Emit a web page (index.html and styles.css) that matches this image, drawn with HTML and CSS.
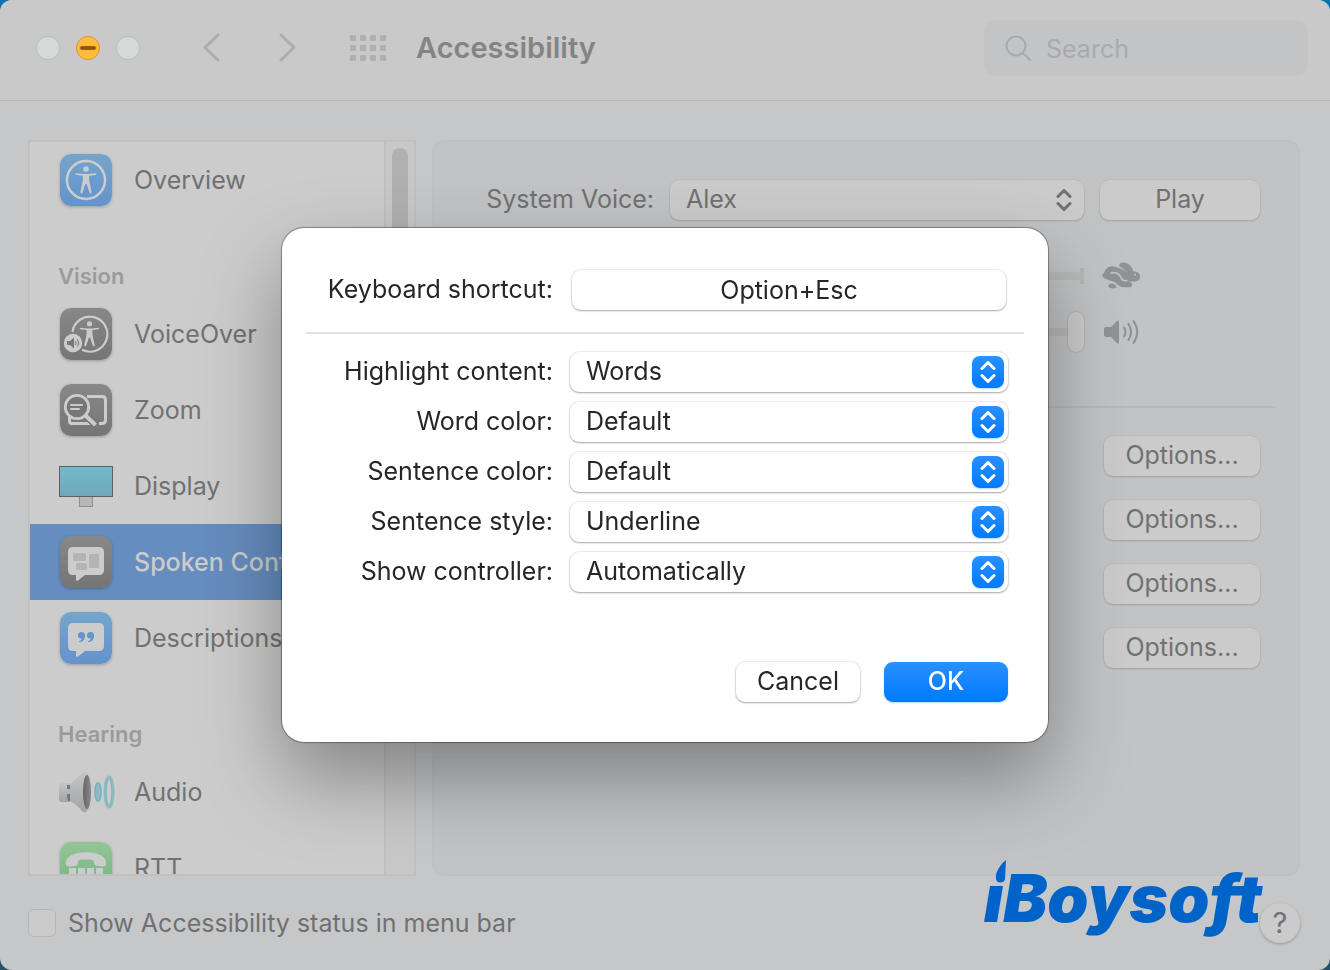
FILE: index.html
```html
<!DOCTYPE html>
<html lang="en">
<head>
    <meta charset="UTF-8">
    <meta name="viewport" content="width=device-width, initial-scale=1.0">
    <title>Accessibility</title>
    <link rel="stylesheet" href="styles.css">
</head>
<body>
    <!-- shared icons -->
    <svg class="sprite" aria-hidden="true">
        <defs>
            <linearGradient id="blue" x1="0" y1="0" x2="0" y2="1">
                <stop offset="0" stop-color="#74a5cc"/><stop offset="1" stop-color="#6493cb"/>
            </linearGradient>
            <linearGradient id="gray" x1="0" y1="0" x2="0" y2="1">
                <stop offset="0" stop-color="#878888"/><stop offset="1" stop-color="#757575"/>
            </linearGradient>
            <linearGradient id="green" x1="0" y1="0" x2="0" y2="1">
                <stop offset="0" stop-color="#94c596"/><stop offset="1" stop-color="#6fb382"/>
            </linearGradient>
            <linearGradient id="screen" x1="0" y1="0" x2="0" y2="1">
                <stop offset="0" stop-color="#73b9cc"/><stop offset="1" stop-color="#6fa8b8"/>
            </linearGradient>
            <linearGradient id="metal" x1="0" y1="0" x2="0" y2="1">
                <stop offset="0" stop-color="#c4c5c6"/><stop offset="1" stop-color="#a2a3a5"/>
            </linearGradient>
            <linearGradient id="cone" x1="0" y1="0" x2="1" y2="0">
                <stop offset="0" stop-color="#646464"/><stop offset="1" stop-color="#8b8b8b"/>
            </linearGradient>
        </defs>
        <symbol id="updown" viewBox="0 0 16 24">
            <path d="M2 8.500 8 2.500l6 6M2 15.500l6 6 6-6" fill="none" stroke="currentColor" stroke-width="3" stroke-linecap="round" stroke-linejoin="round"/>
        </symbol>
        <symbol id="person" viewBox="0 0 22 28">
            <circle cx="11" cy="3" r="2.800"/>
            <path d="M1 7.200Q.4 7 .6 8.100q.1.700 1 .8l6.200.9q.3 3-.2 6l-2.200 10q-.2 1.300.7 1.600 1 .2 1.400-1L10.300 18h1.400l2.800 8.400q.5 1.200 1.400 1 1-.3.700-1.600l-2.200-10q-.5-3-.2-6l6.200-.9q.9-.1 1-.8.100-1.100-.9-.9l-7 .8h-5z"/>
        </symbol>
    </svg>

    <div class="window">
        <header class="toolbar">
            <div class="lights">
                <button class="light" aria-label="Close"></button>
                <button class="light minimize" aria-label="Minimize"></button>
                <button class="light" aria-label="Full screen"></button>
            </div>
            <button class="nav-btn" aria-label="Back">
                <svg width="24" height="32" viewBox="0 0 24 32"><path d="M18 3 5 15.500 18 28"/></svg>
            </button>
            <button class="nav-btn forward" aria-label="Forward">
                <svg width="24" height="32" viewBox="0 0 24 32"><path d="m6 3 13 12.500L6 28"/></svg>
            </button>
            <button class="nav-btn show-all" aria-label="Show all">
                <svg width="36" height="26" viewBox="0 0 36 26">
                    <g class="dots">
                        <rect x="0" y="0" width="6" height="6" rx="1"/><rect x="10" y="0" width="6" height="6" rx="1"/><rect x="20" y="0" width="6" height="6" rx="1"/><rect x="30" y="0" width="6" height="6" rx="1"/>
                        <rect x="0" y="10" width="6" height="6" rx="1"/><rect x="10" y="10" width="6" height="6" rx="1"/><rect x="20" y="10" width="6" height="6" rx="1"/><rect x="30" y="10" width="6" height="6" rx="1"/>
                        <rect x="0" y="20" width="6" height="6" rx="1"/><rect x="10" y="20" width="6" height="6" rx="1"/><rect x="20" y="20" width="6" height="6" rx="1"/><rect x="30" y="20" width="6" height="6" rx="1"/>
                    </g>
                </svg>
            </button>
            <h1>Accessibility</h1>
            <label class="search">
                <svg width="28" height="28" viewBox="0 0 28 28"><circle cx="12" cy="12" r="9.500"/><path d="m19 19 7 7"/></svg>
                <input type="search" placeholder="Search" aria-label="Search">
            </label>
        </header>

        <main class="content">
            <nav class="sidebar">
                <div class="list">
                    <a class="item" href="#overview">
                        <svg class="icon" viewBox="0 0 52 52">
                            <rect width="52" height="52" rx="11" fill="url(#blue)"/>
                            <circle cx="26" cy="26" r="19" fill="none" stroke="#ccc" stroke-width="2.500"/>
                            <use href="#person" x="15" y="12" width="22" height="28" fill="#ccc"/>
                        </svg>
                        <span>Overview</span>
                    </a>
                    <h2>Vision</h2>
                    <a class="item" href="#voiceover">
                        <svg class="icon" viewBox="0 0 52 52">
                            <rect width="52" height="52" rx="11" fill="url(#gray)"/>
                            <path d="M12.500 24A17.500 17.500 0 1 1 22 41.800" fill="none" stroke="#ccc" stroke-width="2.200"/>
                            <use href="#person" x="19" y="13" width="21" height="26" fill="#ccc"/>
                            <circle cx="13" cy="35" r="9.200" fill="#ccc"/>
                            <path d="M7 33h3l4-3.500v11L10 37H7z" fill="#777"/>
                            <path d="M15.500 33q1.200 2 0 4M17.500 31.500q2.500 3.500 0 7" fill="none" stroke="#777" stroke-width="1"/>
                        </svg>
                        <span>VoiceOver</span>
                    </a>
                    <a class="item" href="#zoom">
                        <svg class="icon" viewBox="0 0 52 52">
                            <rect width="52" height="52" rx="11" fill="url(#gray)"/>
                            <path d="M27 12.500h15q3.500 0 3.500 3.500v20q0 3.500-3.500 3.500h-3M9.500 33v4q0 2.500 2.500 2.500h18" fill="none" stroke="#ccc" stroke-width="3"/>
                            <path d="m25 31 11 10.500" stroke="#777" stroke-width="7"/>
                            <path d="m25.500 31.500 10 9.500" stroke="#ccc" stroke-width="4"/>
                            <circle cx="17" cy="23" r="11.700" fill="#777" stroke="#ccc" stroke-width="2.800"/>
                            <path d="M11 21h11M11 25h8" stroke="#ccc" stroke-width="2" stroke-linecap="round"/>
                        </svg>
                        <span>Zoom</span>
                    </a>
                    <a class="item" href="#display">
                        <svg class="icon plain" viewBox="0 0 52 52">
                            <rect x="19.500" y="36" width="13" height="10.500" fill="#b7b7b7" stroke="#8e8e8e"/>
                            <rect x="-.5" y="6.500" width="53" height="30" fill="url(#screen)" stroke="#5c6264"/>
                        </svg>
                        <span>Display</span>
                    </a>
                    <a class="item selected" href="#spoken-content" aria-current="page">
                        <svg class="icon" viewBox="0 0 52 52">
                            <rect width="52" height="52" rx="11" fill="url(#gray)"/>
                            <path d="M13 11h26q5 0 5 5v18q0 5-5 5H25l-7 5.500q-2 1-2-1V39h-3q-5 0-5-5V16q0-5 5-5z" fill="#ccc"/>
                            <rect x="13" y="17" width="13" height="8" rx="1.500" fill="#b4b4b4"/>
                            <rect x="29" y="18" width="10" height="14" rx="1.500" fill="#b4b4b4"/>
                            <rect x="16" y="27" width="11" height="7" rx="1.500" fill="#b4b4b4"/>
                        </svg>
                        <span>Spoken Content</span>
                    </a>
                    <a class="item" href="#descriptions">
                        <svg class="icon" viewBox="0 0 52 52">
                            <rect width="52" height="52" rx="11" fill="url(#blue)"/>
                            <path d="M13 11h26q5 0 5 5v18q0 5-5 5H25l-7 5.500q-2 1-2-1V39h-3q-5 0-5-5V16q0-5 5-5z" fill="#ccc"/>
                            <path d="M21.500 20c-4.700 0-4.700 6.500-.5 6.500h1q-.8 2-2.800 2.700-.5.500.2 1 5.600-1 5.600-6.500 0-3.700-3.500-3.700zM30.500 20c-4.700 0-4.700 6.500-.5 6.500h1q-.8 2-2.800 2.700-.5.500.2 1 5.600-1 5.600-6.500 0-3.700-3.500-3.700z" fill="#6594c8"/>
                        </svg>
                        <span>Descriptions</span>
                    </a>
                    <h2>Hearing</h2>
                    <a class="item" href="#audio">
                        <svg class="icon plain" viewBox="0 0 52 52">
                            <path d="M2 17h8v19H2q-3 0-3-3V20q0-3 3-3z" fill="url(#metal)"/>
                            <path d="M7 19h4v4H7zM7 28h4v7H8q-1-3-1-7z" fill="#777"/>
                            <path d="M10 18Q16 14 22 7q2-2 4-1 5 4 5 20t-5 20q-2 1-4-1Q16 38 10 35z" fill="url(#metal)"/>
                            <ellipse cx="27" cy="26" rx="4" ry="17" fill="url(#cone)"/>
                            <ellipse cx="38" cy="26" rx="3" ry="9" fill="#94b8c1" stroke="#75b5c2" stroke-width="1.500"/>
                            <ellipse cx="49" cy="26" rx="4" ry="15" fill="none" stroke="#8fb8c1" stroke-width="3"/>
                            <ellipse cx="49" cy="26" rx="2.700" ry="13" fill="none" stroke="#71b5c4" stroke-width=".7"/>
                        </svg>
                        <span>Audio</span>
                    </a>
                    <a class="item" href="#rtt">
                        <svg class="icon" viewBox="0 0 52 52">
                            <rect width="52" height="52" rx="11" fill="url(#green)"/>
                            <path d="M6 20C7 7 45 7 46 20q1 5-4 4.500l-5-.5q-3-.5-3-3.500-.2-3-4-3h-8q-4 0-4 3 0 3-3 3.500l-5 .5q-5 .5-4-4.500z" fill="#ccc"/>
                            <path d="M9 26h7v9H9zM18 26h7v9h-7zM27 26h7v9h-7zM36 26h7v9h-7z" fill="#ccc"/>
                        </svg>
                        <span>RTT</span>
                    </a>
                </div>
                <div class="scrollbar"><div class="thumb"></div></div>
            </nav>

            <section class="panel">
                <div class="voice">
                    <label for="voice">System Voice:</label>
                    <div class="select">
                        <select id="voice"><option>Alex</option></select>
                        <svg class="arrows" width="16" height="24"><use href="#updown"/></svg>
                    </div>
                    <button class="btn dim">Play</button>

                    <div class="slider rate">
                        <input type="range" min="0" max="10" value="5" aria-label="Speaking rate">
                    </div>
                    <svg class="level" width="40" height="30" viewBox="0 0 120 90">
                        <path d="M52 11C58-2 88 4 94 31c16 1 22 10 20 20-1 9-13 11-20 11l-16-1 8 3c7 3 6 15-4 15H64c-10 0-18-9-26-15-8-4-18-6-23-9C10 53 4 52 1 46c0-6 4-8 6-12C11 20 24 13 39 17c14 2 26 11 40 18L59 21c-5-3-9-6-7-10zM22 70c10-6 18 0 22 9-6 6-25 4-26-4z"/>
                        <path class="cut" d="M27 36c17-5 28 5 31 16 2 7 8 8 16 7"/>
                        <circle class="eye" cx="99" cy="41" r="3"/>
                    </svg>

                    <div class="slider volume">
                        <input type="range" min="0" max="10" value="10" aria-label="Speaking volume">
                    </div>
                    <svg class="level" width="40" height="30" viewBox="0 0 40 30">
                        <path d="M4 10h5l6-6q2-1.500 2 1v20q0 2.500-2 1l-6-6H4q-2 0-2-2v-6q0-2 2-2z"/>
                        <path class="waves" d="M22 10.500q3 4.500 0 9M26.500 7q5 8 0 16M31.500 4q7.500 11 0 22"/>
                    </svg>
                </div>
                <hr>
                <div class="options">
                    <button class="btn dim">Options...</button>
                    <button class="btn dim">Options...</button>
                    <button class="btn dim">Options...</button>
                    <button class="btn dim">Options...</button>
                </div>
            </section>
        </main>

        <footer class="footer">
            <input type="checkbox" id="status">
            <label for="status">Show Accessibility status in menu bar</label>
            <button class="help">?</button>
        </footer>

        <div class="logo" aria-label="iBoysoft">
            <svg width="12" height="24" viewBox="0 0 12 24"><path d="M11 0C3 7 0 14 1 19q1 4 5 3.500 4-.5 4-4z"/></svg>
            <span>ıBoysoft</span>
        </div>
    </div>

    <div class="overlay">
        <dialog class="sheet" open>
            <form method="dialog">
                <div class="row">
                    <label for="shortcut">Keyboard shortcut:</label>
                    <button type="button" class="btn" id="shortcut">Option+Esc</button>
                </div>
                <hr>
                <div class="row">
                    <label for="highlight">Highlight content:</label>
                    <div class="select">
                        <select id="highlight"><option>Words</option></select>
                        <span class="stepper"><svg width="16" height="24"><use href="#updown"/></svg></span>
                    </div>
                </div>
                <div class="row">
                    <label for="word-color">Word color:</label>
                    <div class="select">
                        <select id="word-color"><option>Default</option></select>
                        <span class="stepper"><svg width="16" height="24"><use href="#updown"/></svg></span>
                    </div>
                </div>
                <div class="row">
                    <label for="sentence-color">Sentence color:</label>
                    <div class="select">
                        <select id="sentence-color"><option>Default</option></select>
                        <span class="stepper"><svg width="16" height="24"><use href="#updown"/></svg></span>
                    </div>
                </div>
                <div class="row">
                    <label for="sentence-style">Sentence style:</label>
                    <div class="select">
                        <select id="sentence-style"><option>Underline</option></select>
                        <span class="stepper"><svg width="16" height="24"><use href="#updown"/></svg></span>
                    </div>
                </div>
                <div class="row">
                    <label for="controller">Show controller:</label>
                    <div class="select">
                        <select id="controller"><option>Automatically</option></select>
                        <span class="stepper"><svg width="16" height="24"><use href="#updown"/></svg></span>
                    </div>
                </div>
                <div class="actions">
                    <button class="btn">Cancel</button>
                    <button class="btn primary">OK</button>
                </div>
            </form>
        </dialog>
    </div>
</body>
</html>
```

FILE: styles.css
```css
* {
    box-sizing: border-box;
}
body {
    margin: 0;
    background: linear-gradient(#0a74b0, #25506b);
    font-family: Inter, "Liberation Sans", sans-serif;
    font-size: 25px;
    line-height: 32px;
    color: #717171;
}
button, input, select {
    font: inherit;
    color: inherit;
    margin: 0;
}
button {
    padding: 0;
    border: none;
    background: none;
}
hr {
    height: 2px;
    margin: 0;
    border: none;
    background: #b7b8b9;
}
.sprite {
    position: absolute;
    width: 0;
    height: 0;
}
.window {
    display: flex;
    flex-direction: column;
    height: 100vh;
    background: #c6c7c9;
    border-radius: 12px;
    overflow: hidden;
}

/* toolbar */
.toolbar {
    display: flex;
    align-items: center;
    padding: 20px 22px 24px 36px;
    background: #c8c9c8;
    border-bottom: 1px solid #b5b6b5;
}
.lights {
    display: flex;
    gap: 16px;
    margin-right: 60px;
}
.light {
    width: 24px;
    height: 24px;
    border-radius: 50%;
    background: #d6dada;
    border: 1px solid #b9bbbb;
}
.minimize {
    display: flex;
    align-items: center;
    justify-content: center;
    background: #ffbd3e;
    border-color: #d9982c;
}
.minimize::before {
    content: "";
    width: 16px;
    height: 4px;
    border-radius: 2px;
    background: #99560b;
}
.nav-btn {
    display: flex;
}
.nav-btn svg {
    fill: none;
    stroke: #acadac;
    stroke-width: 3;
    stroke-linecap: round;
    stroke-linejoin: round;
}
.forward {
    margin: 0 51px;
}
.nav-btn .dots {
    fill: #afb0af;
    stroke: none;
}
.toolbar h1 {
    margin: 0 auto 0 30px;
    font-size: 29px;
    font-weight: 600;
    color: #838483;
}
.search {
    display: flex;
    align-items: center;
    gap: 14px;
    width: 324px;
    height: 56px;
    padding: 0 20px;
    border-radius: 12px;
    background: #c3c4c6;
}
.search svg {
    flex: none;
    fill: none;
    stroke: #a9aaab;
    stroke-width: 2;
    stroke-linecap: round;
}
.search input {
    width: 100%;
    padding: 2px 0 0;
    border: none;
    outline: none;
    background: none;
}
.search input::placeholder {
    color: #a9aaac;
}

/* content */
.content {
    display: grid;
    grid-template-columns: 388px 1fr;
    grid-template-rows: minmax(0, 1fr);
    gap: 16px;
    flex: 1;
    min-height: 0;
    padding: 39px 30px 0 28px;
}
.sidebar {
    display: flex;
    border: 2px solid #c0c0c1;
    background: #ccc;
    overflow: hidden;
}
.list {
    flex: 1;
}
.list h2 {
    height: 78px;
    margin: 0;
    padding: 42px 0 0 28px;
    font-size: 22px;
    font-weight: 600;
    color: #9b9b9b;
}
.item {
    display: flex;
    align-items: center;
    gap: 22px;
    height: 76px;
    padding-left: 30px;
    color: inherit;
    text-decoration: none;
    white-space: nowrap;
}
.selected {
    background: #668dbf;
    color: #ccc;
    font-weight: 500;
}
.icon {
    flex: none;
    width: 52px;
    height: 52px;
    border-radius: 11px;
    box-shadow: 0 1px 3px rgba(0, 0, 0, 0.25);
}
.plain {
    overflow: visible;
    box-shadow: none;
}
.scrollbar {
    width: 30px;
    padding: 6px;
    border-left: 2px solid #c0c0c1;
    background: #c8c8c8;
}
.thumb {
    width: 16px;
    height: 60%;
    border-radius: 8px;
    background: #b0b0b0;
}
.panel {
    padding: 38px 22px;
    border: 2px solid #c0c2c2;
    border-radius: 12px;
    background: #c2c3c5;
}
.voice {
    display: grid;
    grid-template-columns: 198px 1fr 160px;
    align-items: center;
    column-gap: 16px;
    padding-right: 16px;
}
.voice label {
    padding-bottom: 2px;
    text-align: right;
}
.btn {
    height: 40px;
    padding-bottom: 2px;
    border-radius: 9px;
    background: #fff;
    color: #262626;
    box-shadow: 0 0 1px 1px rgba(0, 0, 0, 0.07), 0 1px 2px rgba(0, 0, 0, 0.3);
}
.select {
    position: relative;
    color: #262626;
}
.select select {
    display: block;
    appearance: none;
    width: 100%;
    height: 40px;
    padding: 0 50px 2px 16px;
    border: none;
    border-radius: 9px;
    background: #fff;
    box-shadow: 0 0 1px 1px rgba(0, 0, 0, 0.07), 0 1px 2px rgba(0, 0, 0, 0.3);
}
.btn.dim, .voice select {
    background: #cbcbcb;
    color: #717171;
    box-shadow: 0 0 1px 1px rgba(0, 0, 0, 0.03), 0 1px 2px rgba(0, 0, 0, 0.15);
}
.arrows {
    position: absolute;
    top: 8px;
    right: 12px;
    color: #717171;
    pointer-events: none;
}

/* sliders */
.slider {
    grid-column: 2;
    display: flex;
    height: 40px;
}
.rate {
    margin: 36px 0 16px;
    background: linear-gradient(#b3b5b5, #b3b5b5) right center / 4px 16px no-repeat;
}
.slider input {
    appearance: none;
    width: 100%;
    height: 40px;
    background: linear-gradient(#b8baba, #b8baba) center / 100% 8px no-repeat;
}
.slider input::-webkit-slider-thumb {
    appearance: none;
    width: 16px;
    height: 40px;
    border-radius: 8px;
    background: #cbcbcb;
    box-shadow: 0 0 2px rgba(0, 0, 0, 0.25);
}
.level {
    margin-left: 2px;
    fill: #919293;
}
.rate + .level {
    margin-top: 20px;
}
.cut, .waves {
    fill: none;
    stroke-width: 2;
    stroke: #919293;
    stroke-linecap: round;
}
.cut {
    stroke: #c2c3c5;
    stroke-width: 5;
}
.eye {
    fill: #c2c3c5;
}
.panel hr {
    margin: 54px 0 28px;
}
.options {
    display: flex;
    flex-direction: column;
    align-items: flex-end;
    gap: 24px;
    padding-right: 16px;
}
.options .btn {
    width: 156px;
}

/* footer */
.footer {
    display: flex;
    align-items: center;
    gap: 12px;
    padding: 27px 30px 27px 28px;
}
.footer input {
    appearance: none;
    width: 28px;
    height: 28px;
    border: 1px solid #b4b5b6;
    border-radius: 6px;
    background: #cbcbcb;
}
.help {
    width: 40px;
    height: 40px;
    margin-left: auto;
    border-radius: 50%;
    background: #cbcbcb;
    font-size: 29px;
    box-shadow: 0 1px 3px rgba(0, 0, 0, 0.25);
}
.logo {
    position: absolute;
    right: 68px;
    bottom: 32px;
    font: italic 900 66px/80px Inter, sans-serif;
    color: #0063c8;
}
.logo svg {
    position: absolute;
    top: 2px;
    left: 11px;
    fill: #0063c8;
}

/* sheet */
.overlay {
    position: fixed;
    inset: 0;
    display: flex;
    align-items: center;
    justify-content: center;
}
.sheet {
    position: static;
    width: 766px;
    margin: 0;
    padding: 42px 24px 40px;
    border: none;
    border-radius: 22px;
    background: #fff;
    color: #262626;
    box-shadow: 0 0 1px 1px rgba(0, 0, 0, 0.35), 0 36px 80px rgba(0, 0, 0, 0.35);
}
.row {
    display: grid;
    grid-template-columns: 247px 1fr;
    align-items: center;
    gap: 17px;
    padding-right: 16px;
    margin-bottom: 10px;
}
.row label {
    padding-bottom: 2px;
    text-align: right;
}
.row .btn {
    margin: 0 2px;
    padding: 0;
}
.sheet hr {
    margin: 22px 0 18px;
    background: #e3e3e3;
}
.stepper {
    position: absolute;
    top: 4px;
    right: 4px;
    display: flex;
    align-items: center;
    justify-content: center;
    width: 32px;
    height: 32px;
    border-radius: 8px;
    background: linear-gradient(#2a90ff, #007aff);
    color: #fff;
    box-shadow: 0 1px 2px rgba(0, 122, 255, 0.3);
    pointer-events: none;
}
.actions {
    display: flex;
    justify-content: flex-end;
    gap: 24px;
    margin-top: 70px;
    padding-right: 16px;
}
.actions .btn {
    width: 124px;
}
.actions .primary {
    background: linear-gradient(#2a90ff, #007aff);
    color: #fff;
    font-weight: 500;
    box-shadow: 0 1px 2px rgba(0, 122, 255, 0.3);
}
```
